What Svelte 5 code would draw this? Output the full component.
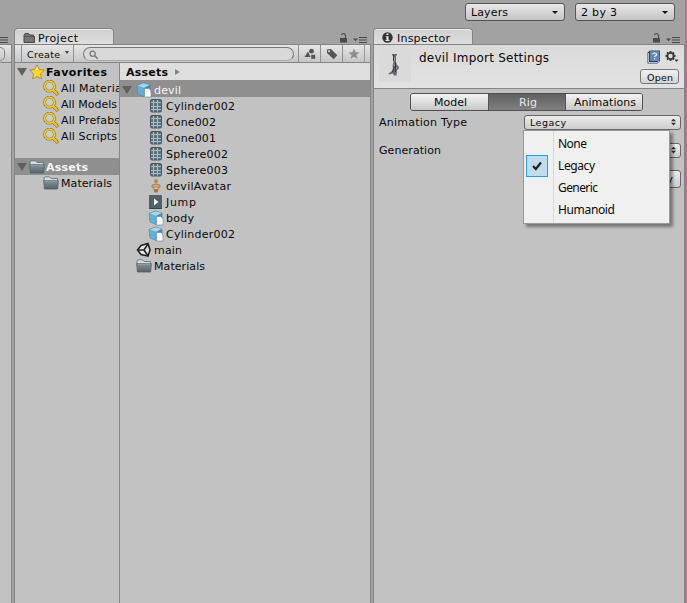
<script lang="ts">
  const searches = ['All Materials', 'All Models', 'All Prefabs', 'All Scripts'];

  const assets = [
    { name: 'Cylinder002', icon: 'mesh', depth: 1, w: 69 },
    { name: 'Cone002', icon: 'mesh', depth: 1, w: 50 },
    { name: 'Cone001', icon: 'mesh', depth: 1, w: 50 },
    { name: 'Sphere002', icon: 'mesh', depth: 1, w: 62 },
    { name: 'Sphere003', icon: 'mesh', depth: 1, w: 62 },
    { name: 'devilAvatar', icon: 'avatar', depth: 1, w: 65 },
    { name: 'Jump', icon: 'clip', depth: 1, w: 30 },
    { name: 'body', icon: 'prefab', depth: 1, w: 28 },
    { name: 'Cylinder002', icon: 'prefab', depth: 1, w: 69 },
    { name: 'main', icon: 'scene', depth: 0, w: 28 },
    { name: 'Materials', icon: 'folder', depth: 0, w: 51 },
  ];

  const options = ['None', 'Legacy', 'Generic', 'Humanoid'];
  let rigType = $state('Legacy');
  let menuOpen = $state(true);

  function choose(o: string) {
    rigType = o;
    menuOpen = false;
  }
</script>

{#snippet icon(name: string)}
  <svg class="ico" width="16" height="16" viewBox="0 0 16 16">
    {#if name === 'mesh'}
      <rect x="2.500" y="1.500" width="11" height="12.500" rx="1.500" fill="#5b727c" stroke="#455961" />
      <path d="M5.500 2v11.500M9.500 2v11.500M3 4.500h10M3 8.500h10M3 11.500h10" stroke="#a9bfc8" fill="none" />
    {:else if name === 'avatar'}
      <ellipse cx="8" cy="3.200" rx="1.800" ry="2.200" fill="#b58a5a" />
      <path d="M4 7q4-2 8 0v2.500l-1.300.5-.9-1-.3 1.500h-3L6.200 9l-.9 1L4 9.500z" fill="#cfa574" stroke="#8b683f" stroke-width=".6" />
      <path d="M5.300 10.500h5.400L9.500 14.500h-3z" fill="#a47443" />
      <path d="M6 10.300h4" stroke="#eed1a0" />
    {:else if name === 'clip'}
      <rect x="1" y="1" width="13" height="14" rx="1" fill="#526168" />
      <path d="M1.500 14.500h12" stroke="#36434a" />
      <path d="M6 4.500l4.500 3.500L6 11.500z" fill="#edf3f5" />
    {:else if name === 'prefab'}
      <path d="M7.500 1l6.500 2v8l-6 3.500L2 12 1 3.500z" fill="#3d8db8" stroke="#5a7f92" stroke-width=".6" />
      <path d="M7.500 1.200l6.300 1.900L7.800 6 1.300 3.700z" fill="#a2d8ee" />
      <path d="M1.300 3.700L7.800 6v8.200L2.200 11.800z" fill="#5cb2db" />
      <path d="M8.500 6.500h4.300L15 8.700V15H8.500z" fill="#fff" stroke="#758a95" stroke-width=".7" />
    {:else if name === 'scene'}
      <path d="M1.500 8L5 3.500 12 1.500 14 8l-2 6-7-1.500z" fill="#e4e4e4" stroke="#222" stroke-width="1.600" />
      <path d="M2 8h6l4-6M8 8l4 6" fill="none" stroke="#222" stroke-width="1.600" />
    {:else if name === 'folder'}
      <path d="M1 3l1-1.200h4.500L8 3.500h6.500V7H1z" fill="#d4dcdd" stroke="#5c6b6e" stroke-width=".8" />
      <path d="M.7 5.500h14.600l-.7 8.500H1.400z" fill="url(#folder)" stroke="#526063" stroke-width=".8" />
      <path d="M1.500 6h13" stroke="#a5b2b4" stroke-width=".7" />
    {:else if name === 'search'}
      <path d="M10 10l3.800 3.800" stroke="#85762f" stroke-width="3.600" stroke-linecap="round" />
      <circle cx="6.500" cy="6.200" r="4.900" fill="#cfcdc2" stroke="#8d8050" stroke-width="2.900" />
      <circle cx="6.500" cy="6.200" r="4.900" fill="none" stroke="#f5cc24" stroke-width="1.700" />
      <path d="M10.300 10.300l3.500 3.500" stroke="#f4c91c" stroke-width="2.200" stroke-linecap="round" />
    {:else if name === 'star'}
      <path d="M8 .8l2.200 4.700 5 .7-3.700 3.500.9 5.200L8 12.500l-4.400 2.400.9-5.200L.8 6.200l5-.7z" fill="#fbd728" stroke="#a98324" stroke-width=".8" />
      <path d="M8 2.200l1.600 3.900H6.400z" fill="#fff07a" />
    {/if}
  </svg>
{/snippet}

{#snippet paneMenu()}
  <svg class="pane-menu" width="30" height="12" viewBox="0 0 30 12">
    <path d="M2 6h7v4.500H2z" fill="#4b4b4b" />
    <path d="M3.500 3Q4 1.500 5.500 1.500T7.500 3.500V6" fill="none" stroke="#4b4b4b" stroke-width="1.100" />
    <path d="M15 6.500h5l-2.500 2.800z" fill="#4b4b4b" />
    <path d="M21 5.500h8M21 8h8M21 10.500h8" stroke="#4b4b4b" />
  </svg>
{/snippet}

{#snippet t(text: string, w: number)}
  <svg class="label" width={w + 2} height="16"><text x="0" y="12" textLength={w} fill="currentColor">{text}</text></svg>
{/snippet}

<svg class="defs" width="0" height="0">
  <linearGradient id="folder" x1="0" y1="0" x2="0" y2="1">
    <stop offset="0" stop-color="#879497" />
    <stop offset="1" stop-color="#56646a" />
  </linearGradient>
</svg>

<div class="editor">
  <header class="topbar">
    <button class="drop layers">{@render t('Layers', 37)}<i class="down"></i></button>
    <button class="drop layout">{@render t('2 by 3', 36)}<i class="down"></i></button>
  </header>

  <main class="panes">
    <section class="pane edge">
      <div class="tabs"><svg width="12" height="16"><path d="M0 9.500h8M0 12h8M0 14.500h8" stroke="#4b4b4b" /></svg></div>
      <div class="body"><div class="toolbar"><div class="edge-search"></div></div></div>
    </section>

    <section class="pane project">
      <div class="tabs">
        <div class="tab">
          <svg width="13" height="12" viewBox="0 0 13 12"><path d="M1 3l1-1.500h3.500L6.500 3h4v1.500h1V10.500H1z" fill="#777" stroke="#454545" /><path d="M1.500 4.500h9.500" stroke="#555" /></svg>
          {@render t('Project', 40)}
        </div>
        {@render paneMenu()}
      </div>
      <div class="body">
        <div class="toolbar">
          <button class="create">{@render t('Create', 33)}<i class="down tiny"></i></button>
          <div class="search">
            <svg width="10" height="10" viewBox="0 0 10 10"><circle cx="3.700" cy="3.700" r="2.600" fill="none" stroke="#777" stroke-width="1.200" /><path d="M5.700 5.700l3 3" stroke="#777" stroke-width="1.500" /></svg>
          </div>
          <button class="filter"><svg width="12" height="12" viewBox="0 0 12 12" fill="#555"><circle cx="7.500" cy="3.200" r="2.400" /><path d="M.5 9L4 3.500 6.500 9z" /><path d="M7.200 6.800h4v4h-4z" /></svg></button>
          <button class="filter"><svg width="12" height="12" viewBox="0 0 12 12"><path d="M1 1.500L5 1l6.300 6.300-3.600 3.900L1 5z" fill="#555" /><circle cx="3" cy="3.200" r="1" fill="#ddd" /></svg></button>
          <button class="filter"><svg width="12" height="12" viewBox="0 0 12 12"><path d="M6 .5l1.500 3.700 4 .2-3.100 2.500 1 3.900L6 8.700l-3.400 2.100 1-3.900L.5 4.400l4-.2z" fill="#8d8d8d" /></svg></button>
          <div class="filter-end"></div>
        </div>
        <div class="columns">
          <nav class="tree">
            <div class="row head"><i class="fold"></i>{@render icon('star')}{@render t('Favorites', 61)}</div>
            {#each searches as s, i}
              <div class="row child">{@render icon('search')}{@render t(s, [70, 56, 59, 56][i])}</div>
            {/each}
            <div class="row head sel roots"><i class="fold"></i>{@render icon('folder')}{@render t('Assets', 42)}</div>
            <div class="row child">{@render icon('folder')}{@render t('Materials', 51)}</div>
          </nav>
          <div class="files">
            <div class="crumb">{@render t('Assets', 42)}<i class="right"></i></div>
            <div class="row sel top"><i class="fold"></i>{@render icon('prefab')}{@render t('devil', 27)}</div>
            {#each assets as a}
              <div class="row" class:nested={a.depth === 1} class:flat={a.depth === 0}>
                {@render icon(a.icon)}{@render t(a.name, a.w)}
              </div>
            {/each}
          </div>
        </div>
      </div>
    </section>

    <section class="pane inspector">
      <div class="tabs">
        <div class="tab">
          <svg width="12" height="12" viewBox="0 0 12 12"><circle cx="5.500" cy="5.500" r="5.200" fill="#333" /><path d="M4.500 1.500h2V3h-2zM3.800 4.300h2.700V8h1v1h-4V8h1V5.300h-.7z" fill="#eee" /></svg>
          {@render t('Inspector', 53)}
        </div>
        {@render paneMenu()}
      </div>
      <div class="body">
        <div class="import">
          <div class="thumb">
            <svg width="32" height="32" viewBox="0 0 32 32">
              <path d="M13 4h5v1.500h-1V12l1 3 2 2-.5 2-1.500 1-.5 5.500H15l-1-2-4 1-.5-1 3.500-2.500 1-2-.5-3 1-4V5.500H13z" fill="#65656c" />
              <path d="M14.500 5v6M16.500 13v9M15 17l-1.500 5" stroke="#38383e" />
              <path d="M15.500 7v4M15 14l.5 2M17.500 17v2" stroke="#9898a3" />
            </svg>
          </div>
          <div class="title">{@render t('devil Import Settings', 130)}</div>
          <div class="tools">
            <div class="pair">
              <svg width="14" height="14" viewBox="0 0 14 14"><path d="M.500 2.500L3 .5h10V11l-2.500 2.500H.5z" fill="#2c4468" /><path d="M3 1.200h9.300v9.800H3z" fill="#6287b3" /><path d="M1.500 3v9.500h8.700l2-1.500" stroke="#bccad9" stroke-width=".9" fill="none" /><path d="M5.600 4.300q.2-1.300 2-1.300t2 1.400q0 .9-1.100 1.400-.8.400-.8 1.300M7.600 8.300v1.300" fill="none" stroke="#fff" stroke-width="1.200" /></svg>
              <svg width="14" height="14" viewBox="0 0 14 14"><circle cx="5.500" cy="6" r="3.100" fill="none" stroke="#3b3b3b" stroke-width="1.800" /><path d="M5.500 1v2M5.500 9v2M.5 6h2M8.500 6h2M2 2.500L3.300 3.800M7.700 8.200L9 9.500M9 2.500L7.700 3.800M3.300 8.200L2 9.500" stroke="#3b3b3b" stroke-width="1.800" /><path d="M9.500 9.500h4l-2 2.500z" fill="#333" /></svg>
            </div>
            <button class="open">{@render t('Open', 26)}</button>
          </div>
        </div>

        <div class="segments">
          <button>{@render t('Model', 33)}</button>
          <button class="on">{@render t('Rig', 18)}</button>
          <button>{@render t('Animations', 62)}</button>
        </div>

        <div class="field">
          {@render t('Animation Type', 88)}
          <div class="picker">
            <button class="select" onclick={() => (menuOpen = !menuOpen)}>{@render t(rigType, 36)}<i class="updown"></i></button>
            {#if menuOpen}
              <div class="menu">
                {#each options as o, i}
                  <button class="option" onclick={() => choose(o)}>
                    <span class="check" class:checked={o === rigType}>
                      {#if o === rigType}
                        <svg width="10" height="10" viewBox="0 0 10 10"><path d="M1 5l2.800 3L9 1.500" fill="none" stroke="#222" stroke-width="2.200" /></svg>
                      {/if}
                    </span>
                    {@render t(o, [29, 37, 40, 57][i])}
                  </button>
                {/each}
              </div>
            {/if}
          </div>
        </div>
        <div class="field second">
          {@render t('Generation', 62)}
          <div class="picker"><button class="select"><span></span><i class="updown"></i></button></div>
        </div>
        <div class="actions"><button class="apply">{@render t('Apply', 29)}</button></div>
      </div>
    </section>
  </main>
</div>

<style>
  :global(body) { background: #a2a2a2; overflow: hidden; }
  .editor {
    box-sizing: border-box; width: 687px; height: 603px;
    border-right: 2px solid #e8578c; background: #a2a2a2;
    font: 11px "DejaVu Sans", Verdana, sans-serif; color: #090909;
    display: flex; flex-direction: column;
  }
  .editor :global(*) { box-sizing: border-box; }
  button { font: inherit; color: inherit; padding: 0; margin: 0; border: 0; background: none; display: flex; align-items: center; }
  svg { flex: none; display: block; }
  .label { overflow: visible; }
  .defs { position: absolute; }

  .topbar { height: 28px; flex: none; display: flex; padding: 3px 10px 0 465px; gap: 10px; }
  .drop {
    height: 18px; width: 100px; padding: 0 6px 0 5px; justify-content: space-between;
    border: 1px solid #555; border-radius: 3px;
    background: linear-gradient(#e8e8e8, #c4c4c4);
  }
  .down { border: 3px solid transparent; border-top-color: #111; border-bottom: 0; }
  .down.tiny { border-width: 2.5px; border-top: 3px solid #444; border-bottom: 0; margin: 0 0 3px 2px; }

  .panes { flex: 1; display: flex; gap: 2px; min-height: 0; }
  .pane { display: flex; flex-direction: column; }
  .edge { width: 12px; }
  .project { width: 357px; }
  .inspector { width: 312px; }
  .tabs { height: 16px; flex: none; display: flex; justify-content: space-between; align-items: flex-end; }
  .tab {
    height: 16px; width: 100px; padding: 2px 0 0 8px; display: flex; align-items: center; gap: 2px;
    border: 1px solid #858585; border-bottom: 0; border-radius: 4px 4px 0 0;
    background: linear-gradient(#d0d0d0, #dedede);
    box-shadow: inset 0 1px #ececec;
  }
  .inspector .tab { gap: 3px; }
  .pane-menu { margin-right: 3px; }
  .inspector .pane-menu { margin-right: 4px; }
  .body { flex: 1; background: #c2c2c2; border: 1px solid #858585; border-bottom: 0; display: flex; flex-direction: column; min-height: 0; }
  .edge .body { border-left: 0; }

  .toolbar { height: 18px; flex: none; display: flex; align-items: stretch; background: linear-gradient(#e6e6e6, #c6c6c6); border-bottom: 1px solid #858585; }
  .edge-search { width: 5px; height: 14px; margin-top: 2px; border: 1px solid #858585; border-left: 0; border-radius: 0 8px 8px 0; }
  .create { margin-left: 6px; width: 53px; padding-left: 5px; border: solid #929292; border-width: 0 1px; font-size: 9.5px; gap: 1px; }
  .search { width: 211px; height: 14px; margin: 2px 4px 0 9px; padding: 1px 5px; border: 1px solid #777; border-bottom-color: #aaa; border-radius: 8px; background: #d9d9d9; }
  .search svg { margin-top: 1px; }
  .filter { width: 22px; border-left: 1px solid #8e8e8e; justify-content: center; }
  .filter-end { flex: 1; border-left: 1px solid #999; }

  .columns { flex: 1; display: flex; min-height: 0; }
  .tree { width: 105px; flex: none; border-right: 1px solid #858585; padding-top: 1px; overflow: hidden; }
  .files { flex: 1; overflow: hidden; }
  .row { height: 16px; display: flex; align-items: center; gap: 2px; white-space: nowrap; }
  .fold { flex: none; width: 0; border: 5px solid transparent; border-top: 8px solid #606060; border-bottom: 0; }
  .head { font-weight: bold; padding-left: 2px; gap: 1.5px; }
  .child { padding-left: 28px; }
  .sel { background: #8f8f8f; color: #f5f5f5; }
  .roots { margin-top: 14px; height: 17px; padding-top: 1px; }
  .crumb { height: 17px; padding-top: 1px; background: #dedede; font-weight: bold; display: flex; align-items: center; padding-left: 6px; gap: 5px; }
  .right { border: 3px solid transparent; border-left: 5px solid #888; border-right: 0; }
  .top { height: 17px; padding: 2px 0 0 2px; margin-bottom: 1px; align-items: flex-start; }
  .top .fold { margin: 4px 2px 0 0; }
  .nested { padding-left: 28px; }
  .flat { padding-left: 16px; }

  .import { height: 44px; flex: none; display: flex; background: linear-gradient(#dadada, #e2e2e2); border-bottom: 1px solid #858585; }
  .thumb { width: 32px; height: 32px; margin: 5px 0 0 5px; background: #dadada; }
  .title { margin: 5px 0 0 8px; font-size: 12px; flex: 1; }
  .tools { padding: 5px 5px 0 0; display: flex; flex-direction: column; align-items: flex-end; }
  .pair { display: flex; gap: 4px; }
  .open { width: 39px; height: 15px; margin-top: 5px; padding-left: 3px; justify-content: center; border: 1px solid #777; border-radius: 3px; font-size: 9.5px; background: linear-gradient(#f0f0f0, #d4d4d4); }

  .segments { display: flex; width: 233px; height: 18px; flex: none; margin: 4px 0 0 36px; border: 1px solid #505050; border-radius: 3px; overflow: hidden; }
  .segments button { width: 77px; flex: none; padding-left: 4px; justify-content: center; background: linear-gradient(#f4f4f4, #c8c8c8); }
  .segments button + button { border-left: 1px solid #555; }
  .segments .on { background: linear-gradient(#606060, #808080); color: #e8e8e8; }

  .field { height: 16px; flex: none; margin: 3px 3px 0 5px; display: flex; justify-content: space-between; align-items: center; }
  .second { margin-top: 12px; }
  .picker { position: relative; width: 157px; }
  .select { width: 157px; height: 15px; padding: 0 4px 0 5px; justify-content: space-between; font-size: 9.5px; border: 1px solid #666; border-radius: 3px; background: linear-gradient(#ececec, #cecece); }
  .updown { width: 5px; height: 7px; background: #333; clip-path: polygon(50% 0, 100% 40%, 0 40%, 0 60%, 100% 60%, 50% 100%, 0 60%, 0 40%); }
  .actions { display: flex; justify-content: flex-end; margin: 12px 3px 0; }
  .apply { width: 48px; height: 18px; justify-content: flex-end; padding-right: 5px; border: 1px solid #666; border-radius: 3px; background: linear-gradient(#eee, #ccc); }

  .menu {
    position: absolute; z-index: 2; left: -1px; top: 15px; width: 147px; height: 94px; padding: 2px;
    border: 1px solid #999; background: linear-gradient(90deg, #f0f0f0 29px, #d8d8d8 29px, #d8d8d8 30px, #f0f0f0 30px);
    box-shadow: 3px 3px 3px #0006;
    font: 12px "Noto Sans", "Open Sans", sans-serif;
  }
  .option { width: 100%; height: 22px; gap: 10px; }
  .check { width: 22px; height: 22px; display: flex; align-items: center; justify-content: center; border: 1px solid transparent; }
  .checked { border-color: #26a0da; background: #c0dded; }
</style>
